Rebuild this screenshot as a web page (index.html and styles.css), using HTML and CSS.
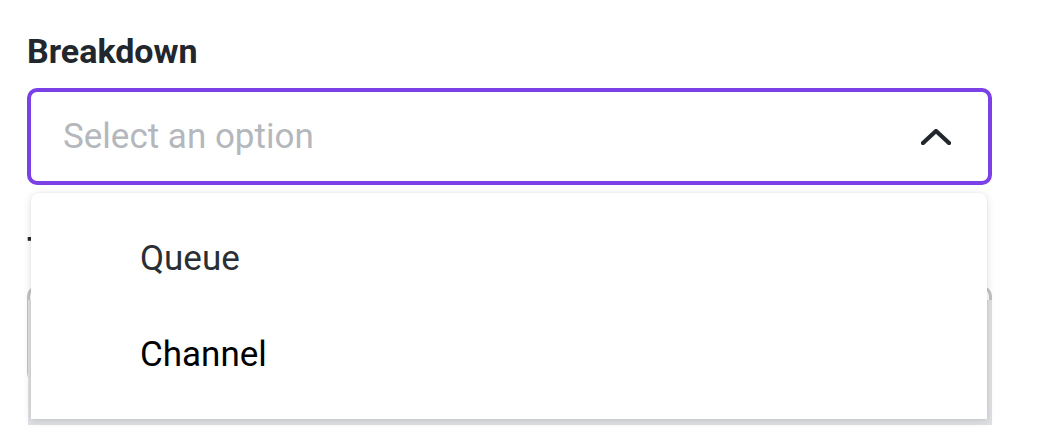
FILE: index.html
```html
<!DOCTYPE html>
<html lang="en">
<head>
<meta charset="utf-8">
<title>Breakdown</title>
<link rel="stylesheet" href="styles.css">
</head>
<body>
<div class="form">
  <div class="field">
    <label class="label">Breakdown</label>
    <div class="select-wrap">
      <div class="select">
        <span class="placeholder">Select an option</span>
        <svg class="chevron" width="30" height="16" viewBox="0 0 30 16"><path d="M2 14 L15 2 L28 14" fill="none" stroke="#22272e" stroke-width="4.2" stroke-linecap="square"/></svg>
      </div>
      <ul class="menu">
        <li class="item item-queue">Queue</li>
        <li class="item">Channel</li>
      </ul>
    </div>
  </div>
  <div class="field field-second">
    <label class="label">Type</label>
    <div class="input"></div>
  </div>
</div>
</body>
</html>
```
FILE: styles.css
```css
* { box-sizing: border-box; }
html, body { margin: 0; padding: 0; background: #fff; }
body { font-family: Roboto, "Noto Sans", sans-serif; width: 1048px; height: 432px; overflow: hidden; }
.form { padding: 31px 56px 0 27px; display: flex; flex-direction: column; }
.field { display: flex; flex-direction: column; }
.label { font-size: 34px; font-weight: 700; line-height: 40px; color: #22272e; margin-bottom: 17px; }
.select-wrap { position: relative; z-index: 2; }
.select {
  height: 97px;
  border: 4px solid #7b40e6;
  border-radius: 10px;
  display: flex;
  align-items: center;
  padding: 0 37px 0 32px;
  justify-content: space-between;
}
.placeholder { font-size: 35px; color: #b4b7bc; line-height: 40px; }
.chevron { display: block; }
.menu {
  position: absolute;
  top: calc(100% + 8px);
  left: 4px;
  width: 956px;
  height: 226px;
  margin: 0;
  padding: 17px 0 0 109px;
  list-style: none;
  background: #fff;
  border-radius: 8px 8px 0 0;
  box-shadow: 0 2px 10px rgba(0,0,0,0.12), 0 0 3px rgba(0,0,0,0.06);
}
.menu::before {
  content: "";
  position: absolute;
  top: 107px;
  left: -3px;
  right: -5px;
  bottom: -6px;
  background: #e0e1e4;
  z-index: -1;
}
.menu::after {
  content: "";
  position: absolute;
  inset: 0;
  background: #fff;
  border-radius: 8px 8px 0 0;
  z-index: -1;
}
.item { height: 96px; display: flex; align-items: center; font-size: 35px; color: #000; }
.item-queue { color: #2a2f36; }
.field-second { margin-top: 44px; }
.input { height: 97px; border: 3px solid #c2c3c7; border-radius: 10px; }
```
